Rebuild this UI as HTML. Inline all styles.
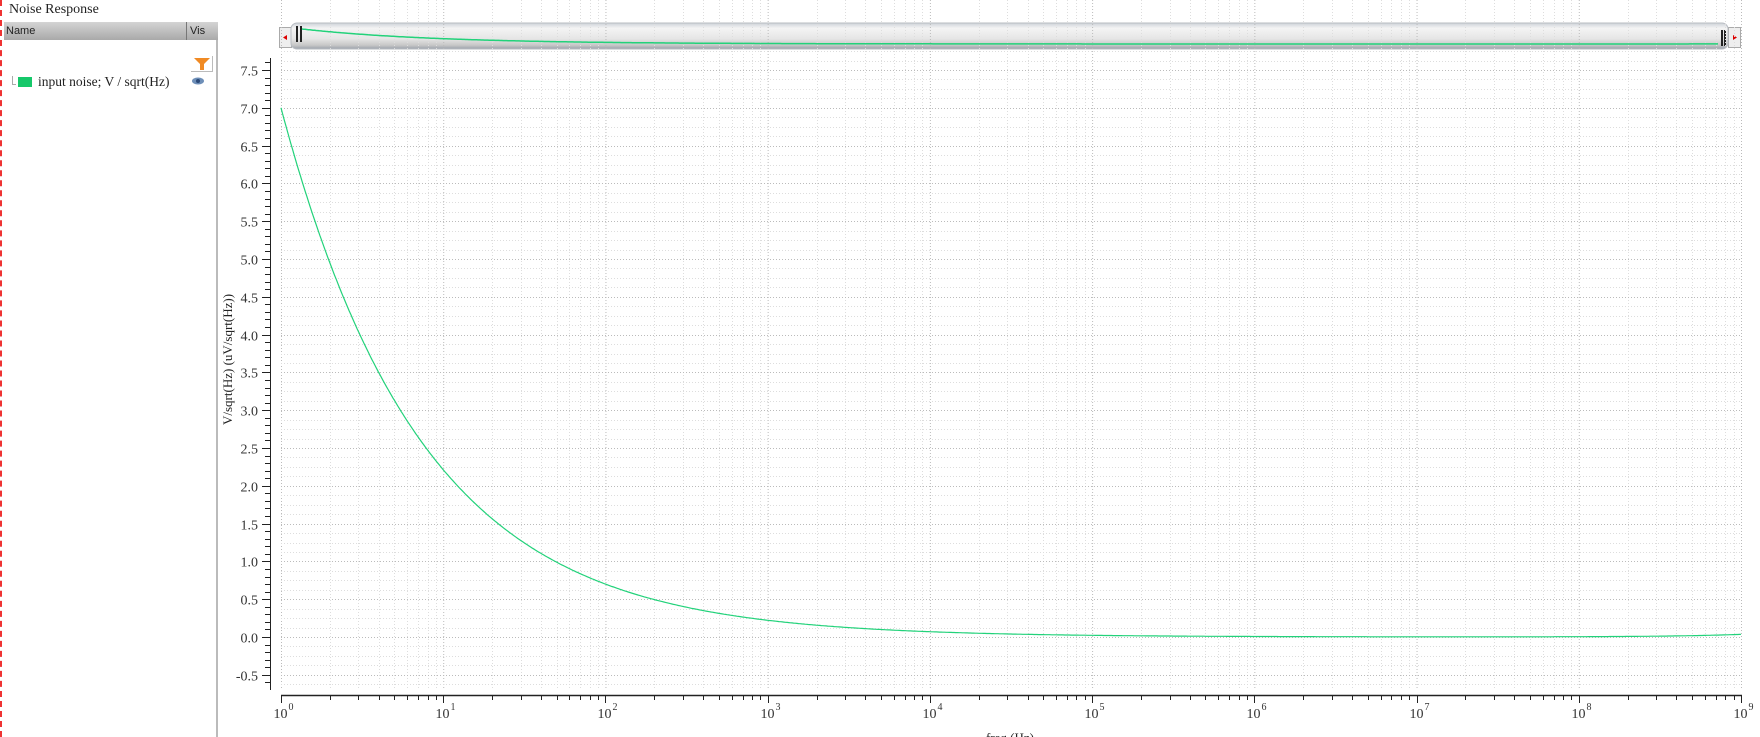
<!DOCTYPE html>
<html><head><meta charset="utf-8"><style>
html,body{margin:0;padding:0;width:1760px;height:737px;overflow:hidden;background:#fff;font-family:"Liberation Serif",serif;}
#redline{position:absolute;left:0;top:0;width:0;height:737px;border-left:2px dashed #e33;}
#title{position:absolute;left:9px;top:2px;font-size:14px;color:#222;}
#panel{position:absolute;left:4px;top:22px;width:212px;height:715px;border-right:2px solid #bbb;}
#hdr{position:absolute;left:0;top:0;width:214px;height:18px;background:linear-gradient(#d4d4d4,#a9a9a9);font-family:"Liberation Sans",sans-serif;font-size:11px;color:#222;}
#hdr span{position:absolute;top:3px;}
#vsep{position:absolute;left:182px;top:0;width:1px;height:18px;background:#777;}
</style></head><body>
<div id="redline"></div>
<div id="title">Noise Response</div>
<div id="panel">
 <div id="hdr"><span style="left:2px">Name</span><div id="vsep"></div><span style="left:186px">Vis</span></div>
</div>
<svg width="1760" height="737" style="position:absolute;left:0;top:0" xmlns="http://www.w3.org/2000/svg">
 <path d="M12.5 76 V84.5 H16" stroke="#aaa" fill="none"/>
 <rect x="18" y="77" width="14" height="10" fill="#16c86a"/>
 <text x="38" y="86" font-size="13.5" fill="#222" font-family="Liberation Serif,serif">input noise; V / sqrt(Hz)</text>
 <path d="M191 71.5 H212.5 V56" stroke="#bbb" fill="none"/>
 <path d="M194 58 H210 L204 64 V70 H200 V64 Z" fill="#f08a24"/>
 <ellipse cx="198" cy="81" rx="6" ry="3.5" fill="#6e8fb8"/>
 <circle cx="198" cy="81" r="2" fill="#2c4b7a"/>
 <defs>
  <linearGradient id="g1" x1="0" y1="0" x2="0" y2="1">
   <stop offset="0" stop-color="#cdd2d8"/><stop offset="0.2" stop-color="#f4f4f4"/><stop offset="0.6" stop-color="#e6e6e6"/><stop offset="0.85" stop-color="#c8c8c8"/><stop offset="1" stop-color="#9aa0aa"/>
  </linearGradient>
 </defs>
 <rect x="279.5" y="27.5" width="12" height="20" fill="#eee" stroke="#aaa"/>
 <path d="M283 37.5 L287 35 V40 Z" fill="#d00"/>
 <rect x="1728.5" y="27.5" width="12" height="20" fill="#eee" stroke="#aaa"/>
 <path d="M1737 37.5 L1733 35 V40 Z" fill="#d00"/>
 <rect x="291" y="23" width="1437" height="26" rx="6" fill="url(#g1)" stroke="#b8bcc2"/>
 <rect x="296" y="26" width="2" height="16" fill="#222"/><rect x="300" y="26" width="2" height="16" fill="#222"/>
 <rect x="1721" y="30" width="2" height="16" fill="#222"/><rect x="1724" y="30" width="2" height="16" fill="#222"/>
 <g id="grid"></g>
 <g id="axes"></g>
 <polyline id="mini" fill="none" stroke="#22d27a" stroke-width="1.5"/>
 <polyline id="curve" fill="none" stroke="#22d27a" stroke-width="1.2"/>
 <text x="0" y="0" font-size="13" fill="#222" transform="translate(232,425) rotate(-90)" font-family="Liberation Serif,serif">V/sqrt(Hz)  (uV/sqrt(Hz))</text>
 <text x="1010" y="742" font-size="13" fill="#222" text-anchor="middle">freq (Hz)</text>
</svg>
<script>
var NS="http://www.w3.org/2000/svg";
function el(p,t,a,txt){var e=document.createElementNS(NS,t);for(var k in a)e.setAttribute(k,a[k]);if(txt!=null)e.textContent=txt;p.appendChild(e);return e;}
var X0=281,DW=(1741-281)/9,top=55,bot=690;
function X(l){return X0+l*DW;} function Y(v){return 637-75.6*v;}
var g=document.getElementById('grid'),a=document.getElementById('axes');
for(var d=0;d<=9;d++){
 el(g,'line',{x1:X(d)+.5,x2:X(d)+.5,y1:top,y2:bot,stroke:'#bbb','stroke-dasharray':'1,2'});
 if(d<9)for(var m=2;m<10;m++){var x=Math.round(X(d+Math.log10(m)))+.5;el(g,'line',{x1:x,x2:x,y1:top,y2:bot,stroke:'#ddd','stroke-dasharray':'1,2'});}
}
for(var v=-0.625;v<=7.75;v+=0.125){var y=Math.round(Y(v))+.5;if(y<top)continue;var maj=Math.abs(v*2-Math.round(v*2))<1e-6;el(g,'line',{x1:X0,x2:1741,y1:y,y2:y,stroke:maj?'#bbb':'#ddd','stroke-dasharray':'1,2'});}
el(a,'line',{x1:270.5,x2:270.5,y1:58,y2:690,stroke:'#222'});
for(var i=-6;i<=76;i++){var v=i/10,y=Math.round(Y(v))+.5;if(y<58||y>690)continue;var maj=i%5==0;el(a,'line',{x1:maj?262:265,x2:270,y1:y,y2:y,stroke:'#222'});
 if(maj)el(a,'text',{x:258,y:y+5,'font-size':14,'text-anchor':'end',fill:'#333','font-family':'Liberation Serif,serif'},v.toFixed(1));}
el(a,'line',{x1:X0,x2:1742,y1:695.5,y2:695.5,stroke:'#222','stroke-width':1.5});
for(var d=0;d<=9;d++){var x=Math.round(X(d))+.5;el(a,'line',{x1:x,x2:x,y1:695,y2:703,stroke:'#222'});
 el(a,'text',{x:x-8,y:718,'font-size':14,fill:'#333','font-family':'Liberation Serif,serif'},'10');
 el(a,'text',{x:x+7,y:710,'font-size':10,fill:'#333','font-family':'Liberation Serif,serif'},''+d);
 if(d<9)for(var m=2;m<10;m++){var xx=Math.round(X(d+Math.log10(m)))+.5;el(a,'line',{x1:xx,x2:xx,y1:695,y2:700,stroke:'#222'});}}
var pts=[],mp=[];
for(var i=0;i<=900;i++){var l=i/100,f=Math.pow(10,l);var v=7/Math.sqrt(f)+0.035*Math.pow(10,l-9);
 pts.push(X(l).toFixed(1)+','+Y(v).toFixed(1));
 mp.push((302+l*(1718-302)/9).toFixed(1)+','+(44-15*v/7).toFixed(1));}
document.getElementById('curve').setAttribute('points',pts.join(' '));
document.getElementById('mini').setAttribute('points',mp.join(' '));
</script>
</body></html>
